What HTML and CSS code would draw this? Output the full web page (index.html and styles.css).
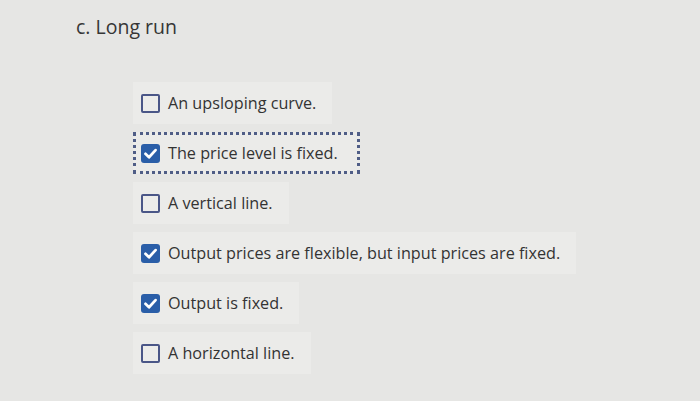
FILE: index.html
```html
<!DOCTYPE html>
<html>
<head>
<meta charset="utf-8">
<link rel="stylesheet" href="styles.css">
</head>
<body>
<div class="page">
  <h2 class="title">c. Long run</h2>
  <div class="options">
    <div class="opt"><span class="box"></span><span class="label">An upsloping curve.</span></div>
    <div class="opt focus"><span class="box checked"><svg viewBox="0 0 18 18"><path d="M4.2 9.3 L7.6 12.5 L13.8 5.8" /></svg></span><span class="label">The price level is fixed.</span></div>
    <div class="opt"><span class="box"></span><span class="label">A vertical line.</span></div>
    <div class="opt"><span class="box checked"><svg viewBox="0 0 18 18"><path d="M4.2 9.3 L7.6 12.5 L13.8 5.8" /></svg></span><span class="label">Output prices are flexible, but input prices are fixed.</span></div>
    <div class="opt"><span class="box checked"><svg viewBox="0 0 18 18"><path d="M4.2 9.3 L7.6 12.5 L13.8 5.8" /></svg></span><span class="label">Output is fixed.</span></div>
    <div class="opt"><span class="box"></span><span class="label">A horizontal line.</span></div>
  </div>
</div>
</body>
</html>
```
FILE: styles.css
```css
html, body {
  margin: 0;
  padding: 0;
  background: #e6e6e4;
}
.page {
  width: 700px;
  height: 401px;
  overflow: hidden;
  font-family: "Open Sans", "Liberation Sans", sans-serif;
  color: #343434;
}
.title {
  margin: 0;
  padding: 13px 0 0 76px;
  font-size: 19.5px;
  font-weight: 400;
  line-height: 28px;
  color: #363636;
}
.options {
  margin: 41px 0 0 133px;
  display: flex;
  flex-direction: column;
  align-items: flex-start;
  gap: 8px;
}
.opt {
  display: flex;
  align-items: center;
  gap: 8px;
  height: 42px;
  padding: 0 16px 0 8px;
  background: #ebebe9;
  box-sizing: border-box;
}
.focus {
  outline: 3px dotted #4f5d86;
  outline-offset: -3px;
  padding-right: 22px;
}
.box {
  width: 19px;
  height: 19px;
  box-sizing: border-box;
  border: 2px solid #4a5687;
  border-radius: 2px;
  background: #ececea;
  flex: none;
  display: flex;
}
.box.checked {
  background: #2a5ea8;
  border-color: #2a5ea8;
  border-radius: 3px;
  border-width: 0;
}
.box svg {
  width: 19px;
  height: 19px;
}
.box path {
  fill: none;
  stroke: #ffffff;
  stroke-width: 2.6;
  stroke-linecap: round;
  stroke-linejoin: round;
}
.label {
  font-size: 16.2px;
  line-height: 20px;
  white-space: nowrap;
  color: #333333;
  font-variant-ligatures: none;
}
```
